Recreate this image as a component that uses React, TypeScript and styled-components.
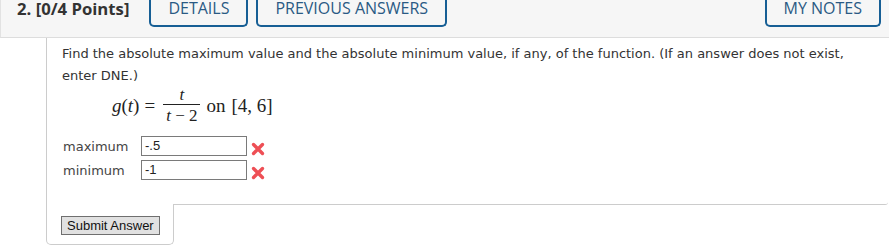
import React from "react";
import styled, { createGlobalStyle } from "styled-components";

const Global = createGlobalStyle`
  html, body { margin: 0; padding: 0; background: #ffffff; }
  body { font-family: "DejaVu Sans", Verdana, sans-serif; }
`;

const Page = styled.div`
  width: 889px;
  height: 249px;
  overflow: hidden;
  background: #fff;
`;

const Header = styled.div`
  display: flex;
  align-items: flex-start;
  box-sizing: border-box;
  height: 38px;
  background: #f6f6f6;
  border-bottom: 1px solid #dddddd;
  border-left: 1px solid #e2e2e2;
  padding-left: 16px;
  padding-right: 8px;
  font-family: "Open Sans", sans-serif;
`;

const Title = styled.div`
  font-size: 16.7px;
  font-weight: 700;
  line-height: 17px;
  color: #333;
  margin-right: 20px;
  white-space: nowrap;
`;

const TabButton = styled.div<{ $push?: boolean }>`
  box-sizing: border-box;
  height: 27px;
  border: 2px solid #175f95;
  border-top: none;
  border-radius: 0 0 5px 5px;
  padding: 0 17px;
  margin-right: ${(p) => (p.$push ? "0" : "8px")};
  margin-left: ${(p) => (p.$push ? "auto" : "0")};
  font-size: 16px;
  line-height: 17px;
  color: #2a5a84;
  white-space: nowrap;
`;

const Panel = styled.div`
  margin-left: 46px;
  margin-right: 1px;
  border-left: 1px solid #cccccc;
  border-bottom: 1px solid #cccccc;
  border-bottom-right-radius: 3px;
  box-sizing: border-box;
  height: 167px;
  padding: 5px 0 0 15px;
`;

const Question = styled.p`
  margin: 0;
  font-family: "DejaVu Sans", Verdana, sans-serif;
  font-size: 13px;
  line-height: 22px;
  color: #333;
  width: 800px;
`;

const MathLine = styled.div`
  display: flex;
  align-items: center;
  margin: -2px 0 0 50px;
  font-family: "Liberation Serif", "DejaVu Serif", serif;
  font-size: 19px;
  color: #222;
  height: 41px;
`;

const It = styled.span`
  font-style: italic;
`;

const Frac = styled.span`
  display: inline-flex;
  flex-direction: column;
  align-items: center;
  margin: 0 6px 0 0;
  font-size: 17px;
`;

const Num = styled.span`
  border-bottom: 1px solid #222;
  padding: 0 3px;
  align-self: stretch;
  text-align: center;
  line-height: 19px;
`;

const Den = styled.span`
  padding: 0 3px;
  line-height: 21px;
`;

const Rel = styled.span`
  margin: 0 8px 0 5px;
`;

const Interval = styled.span`
  margin-left: 6px;
`;

const Rows = styled.div`
  display: flex;
  flex-direction: column;
  gap: 4px;
  margin-top: 10px;
`;

const Row = styled.div`
  display: flex;
  align-items: center;
  height: 20px;
`;

const Label = styled.span`
  width: 78px;
  padding-left: 1px;
  font-family: "DejaVu Sans", Verdana, sans-serif;
  font-size: 13px;
  color: #444;
`;

const Answer = styled.div`
  box-sizing: border-box;
  width: 106px;
  height: 20px;
  border: 1px solid #7a7a7a;
  padding: 0 3px;
  font-family: "Liberation Sans", Arial, sans-serif;
  font-size: 13px;
  line-height: 18px;
  color: #222;
`;

const Mark = styled.svg`
  margin-left: 4px;
  margin-top: 6px;
`;

const SubmitTab = styled.div`
  position: relative;
  margin-left: 46px;
  margin-top: -1px;
  width: 128px;
  height: 41px;
  box-sizing: border-box;
  background: #fff;
  border: 1px solid #cccccc;
  border-top: none;
  border-radius: 0 0 5px 5px;
  padding: 11px 0 0 14px;
`;

const SubmitButton = styled.div`
  display: inline-block;
  box-sizing: border-box;
  height: 19px;
  padding: 0 5px;
  background: #e1e1e1;
  border: 1px solid #6f6f6f;
  font-family: "Liberation Sans", Arial, sans-serif;
  font-size: 13px;
  line-height: 17px;
  color: #111;
`;

const Cross = () => (
  <Mark width="14" height="14" viewBox="0 0 14 14">
    <path
      d="M2.5 2.5 L11.5 11.5 M11.5 2.5 L2.5 11.5"
      stroke="#ee4f55"
      strokeWidth="3.4"
      strokeLinecap="round"
    />
  </Mark>
);

export default function App() {
  return (
    <Page>
      <Global />
      <Header>
        <Title>2. [0/4 Points]</Title>
        <TabButton>DETAILS</TabButton>
        <TabButton>PREVIOUS ANSWERS</TabButton>
        <TabButton $push>MY NOTES</TabButton>
      </Header>
      <Panel>
        <Question>
          Find the absolute maximum value and the absolute minimum value, if any, of the function. (If an answer does not exist, enter DNE.)
        </Question>
        <MathLine>
          <It>g</It>(<It>t</It>)<Rel>=</Rel>
          <Frac>
            <Num>
              <It>t</It>
            </Num>
            <Den>
              <It>t</It> − 2
            </Den>
          </Frac>
          on<Interval>[4, 6]</Interval>
        </MathLine>
        <Rows>
          <Row>
            <Label>maximum</Label>
            <Answer>-.5</Answer>
            <Cross />
          </Row>
          <Row>
            <Label>minimum</Label>
            <Answer>-1</Answer>
            <Cross />
          </Row>
        </Rows>
      </Panel>
      <SubmitTab>
        <SubmitButton>Submit Answer</SubmitButton>
      </SubmitTab>
    </Page>
  );
}
